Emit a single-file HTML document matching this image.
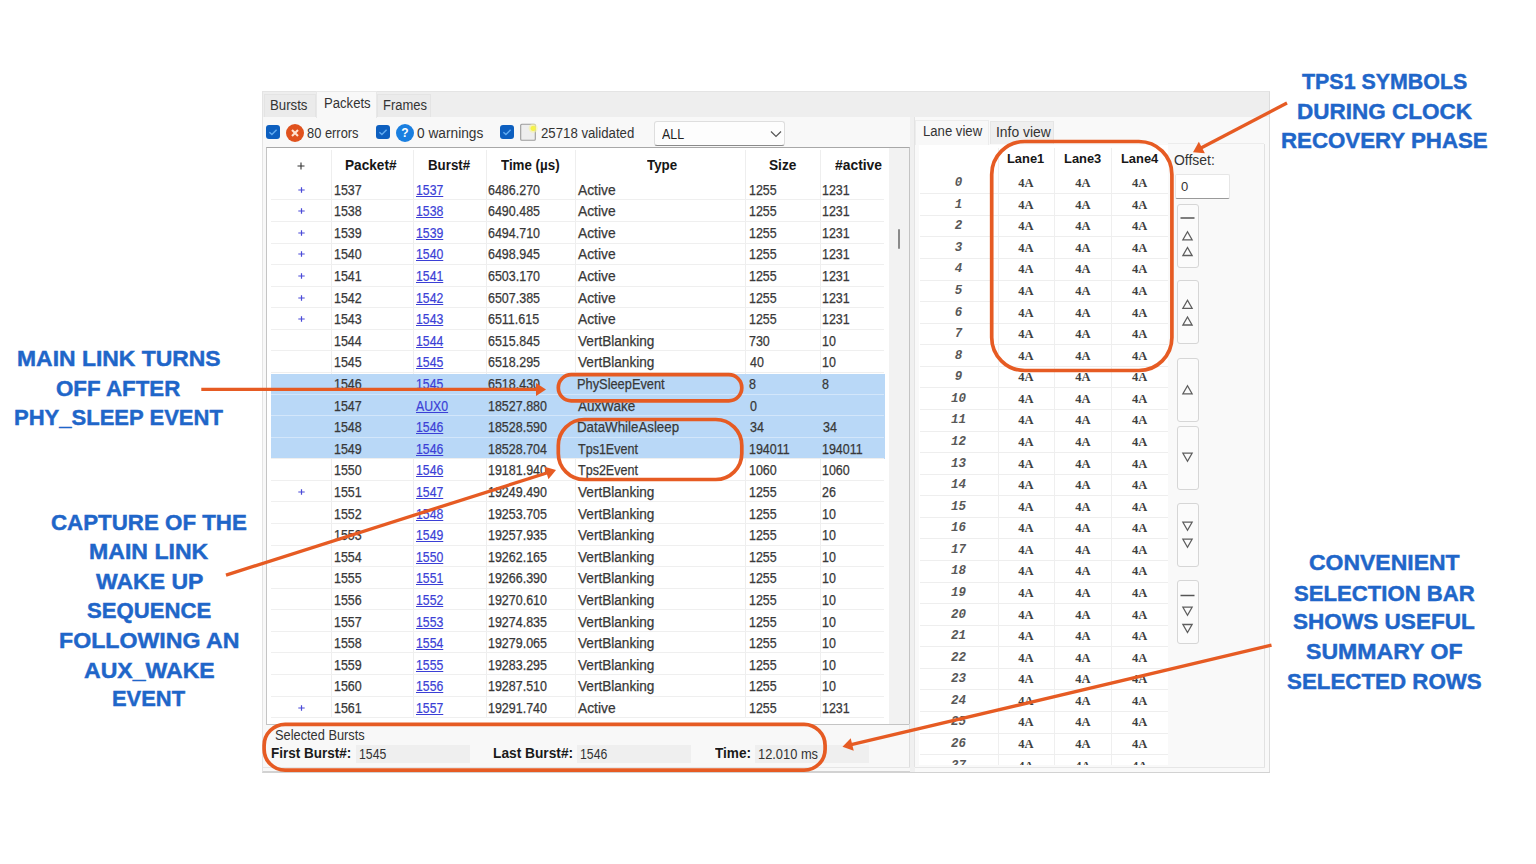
<!DOCTYPE html><html><head><meta charset="utf-8"><title>Packets</title><style>
*{margin:0;padding:0;box-sizing:border-box}
html,body{width:1536px;height:864px;overflow:hidden;background:#fff;position:relative;font-family:"Liberation Sans",sans-serif}
.ab{position:absolute}
.ui{font-size:12px;color:#2a2a2a;white-space:nowrap}
.t{position:absolute;white-space:nowrap;font-size:12px;color:#2b2b2b;line-height:21px;height:21px}
.lk{color:#3b3fd6;text-decoration:underline}
.hd{position:absolute;white-space:nowrap;font-size:13.4px;font-weight:bold;color:#151515;line-height:20px;height:20px;transform:translateX(-50%)}
.pl{position:absolute;color:#4545d8;font-size:12px;font-weight:bold;line-height:21px;height:21px;transform:translateX(-50%)}
.hl{position:absolute;left:271px;width:614px;background:#b9d8f7}
.rl{position:absolute;height:1px;background:#ededed}
.vl{position:absolute;width:1px;background:#eeeeee}
.ann{position:absolute;font-weight:bold;color:#1f66c9;-webkit-text-stroke:0.45px #1f66c9;white-space:nowrap}
.ln{position:absolute;width:1px;background:#ececec}
.ri{position:absolute;font-family:"Liberation Mono",monospace;font-style:italic;font-weight:bold;font-size:12.5px;color:#585858;line-height:20px;height:20px;transform:translateX(-50%)}
.la{position:absolute;font-family:"Liberation Serif",serif;font-weight:bold;font-size:12.5px;color:#3f3f3f;line-height:20px;height:20px;transform:translateX(-50%)}
.btn{position:absolute;left:1177px;width:22px;background:#fbfbfb;border:1px solid #d6d6d6;border-radius:3px}
</style></head><body>
<div class="ab" style="left:262px;top:91px;width:1008px;height:682px;background:#f8f8f8;border:1px solid #e4e4e4;border-bottom:2px solid #d2d2d2;border-right-color:#dcdcdc"></div>
<div class="ab" style="left:263px;top:92px;width:1006px;height:25px;background:#eeeeee"></div>
<div class="ab" style="left:264px;top:94px;width:52px;height:23px;background:#ebebeb;border:1px solid #e4e4e4;border-bottom:none"></div>
<div class="ab" style="left:316px;top:91px;width:61px;height:27px;background:#f8f8f8;border:1px solid #e8e8e8;border-bottom:none"></div>
<div class="ab" style="left:377px;top:94px;width:54px;height:23px;background:#ebebeb;border:1px solid #e4e4e4;border-bottom:none"></div>
<div class="ab" style="left:266px;top:125px;width:14px;height:14px;background:#0d5fbf;border-radius:3px"><svg width="14" height="14" style="position:absolute;left:0;top:0"><path d="M3.4 7.3 L5.9 9.6 L10.6 4.8" stroke="#62acf2" stroke-width="1.4" fill="none"/></svg></div>
<div class="ab" style="left:286px;top:124px;width:18px;height:18px;border-radius:50%;background:#e0521e"><svg width="18" height="18" style="position:absolute;left:0;top:0"><path d="M6 6 L12 12 M12 6 L6 12" stroke="#ffe3d2" stroke-width="2.1"/></svg></div>
<div class="ab" style="left:376px;top:125px;width:14px;height:14px;background:#0d5fbf;border-radius:3px"><svg width="14" height="14" style="position:absolute;left:0;top:0"><path d="M3.4 7.3 L5.9 9.6 L10.6 4.8" stroke="#62acf2" stroke-width="1.4" fill="none"/></svg></div>
<div class="ab" style="left:396px;top:124px;width:18px;height:18px;border-radius:50%;background:#1a7fe0;color:#fff;font-weight:bold;font-size:12px;line-height:18px;text-align:center">?</div>
<div class="ab" style="left:500px;top:125px;width:14px;height:14px;background:#0d5fbf;border-radius:3px"><svg width="14" height="14" style="position:absolute;left:0;top:0"><path d="M3.4 7.3 L5.9 9.6 L10.6 4.8" stroke="#62acf2" stroke-width="1.4" fill="none"/></svg></div>
<svg class="ab" style="left:519px;top:122px" width="20" height="21"><rect x="1.7" y="2.3" width="14.6" height="16" rx="1" fill="#eeeeee" stroke="#9a9a9a" stroke-width="1.1"/><circle cx="14.2" cy="6.3" r="4.5" fill="#f8f5a0" opacity="0.6"/><circle cx="14.2" cy="6.3" r="2.6" fill="#f5f24a"/></svg>
<div class="ab" style="left:654px;top:121px;width:131px;height:25px;background:#fdfdfd;border:1px solid #dedede;border-bottom:1px solid #8a8a8a;border-radius:3px"></div>
<svg class="ab" style="left:769px;top:129px" width="14" height="10"><path d="M2 2.5 L7 7.5 L12 2.5" stroke="#555" stroke-width="1.2" fill="none"/></svg>
<div class="ab" style="left:266px;top:147px;width:644px;height:578px;background:#fff;border:1px solid #c4c4c4;border-top-color:#a8a8a8"></div>
<div class="ab" style="left:889px;top:148px;width:20px;height:576px;background:#f2f2f2"></div>
<div class="ab" style="left:897.5px;top:229px;width:2px;height:20px;background:#8a8a8a;border-radius:1px"></div>
<div class="vl" style="left:331px;top:150px;height:568px"></div>
<div class="vl" style="left:412.5px;top:150px;height:568px"></div>
<div class="vl" style="left:486px;top:150px;height:568px"></div>
<div class="vl" style="left:575px;top:150px;height:568px"></div>
<div class="vl" style="left:745px;top:150px;height:568px"></div>
<div class="vl" style="left:820px;top:150px;height:568px"></div>
<svg class="ab" style="left:297px;top:162px" width="8" height="8"><path d="M0.5 4 H7.5 M4 0.5 V7.5" stroke="#333" stroke-width="1.1"/></svg>
<div class="hl" style="top:373.53px;height:85.28px"></div>
<div class="rl" style="left:271px;width:613px;top:199.47px;background:#efefef"></div>
<div class="rl" style="left:271px;width:613px;top:221.04px;background:#efefef"></div>
<div class="rl" style="left:271px;width:613px;top:242.61px;background:#efefef"></div>
<div class="rl" style="left:271px;width:613px;top:264.18px;background:#efefef"></div>
<div class="rl" style="left:271px;width:613px;top:285.75px;background:#efefef"></div>
<div class="rl" style="left:271px;width:613px;top:307.32px;background:#efefef"></div>
<div class="rl" style="left:271px;width:613px;top:328.89px;background:#efefef"></div>
<div class="rl" style="left:271px;width:613px;top:350.46px;background:#efefef"></div>
<div class="rl" style="left:271px;width:613px;top:372.03px;background:#efefef"></div>
<div class="rl" style="left:271px;width:613px;top:393.60px;background:#d3e6fa"></div>
<div class="rl" style="left:271px;width:613px;top:415.17px;background:#d3e6fa"></div>
<div class="rl" style="left:271px;width:613px;top:436.74px;background:#d3e6fa"></div>
<div class="rl" style="left:271px;width:613px;top:458.31px;background:#efefef"></div>
<div class="rl" style="left:271px;width:613px;top:479.88px;background:#efefef"></div>
<div class="rl" style="left:271px;width:613px;top:501.45px;background:#efefef"></div>
<div class="rl" style="left:271px;width:613px;top:523.02px;background:#efefef"></div>
<div class="rl" style="left:271px;width:613px;top:544.59px;background:#efefef"></div>
<div class="rl" style="left:271px;width:613px;top:566.16px;background:#efefef"></div>
<div class="rl" style="left:271px;width:613px;top:587.73px;background:#efefef"></div>
<div class="rl" style="left:271px;width:613px;top:609.30px;background:#efefef"></div>
<div class="rl" style="left:271px;width:613px;top:630.87px;background:#efefef"></div>
<div class="rl" style="left:271px;width:613px;top:652.44px;background:#efefef"></div>
<div class="rl" style="left:271px;width:613px;top:674.01px;background:#efefef"></div>
<div class="rl" style="left:271px;width:613px;top:695.58px;background:#efefef"></div>
<div class="rl" style="left:271px;width:613px;top:717.15px;background:#efefef"></div>
<svg class="ab" style="left:297.5px;top:186.60px" width="7" height="6"><path d="M0.3 3 H6.7 M3.5 0.2 V5.8" stroke="#4a4ad8" stroke-width="1.2"/></svg>
<svg class="ab" style="left:297.5px;top:208.20px" width="7" height="6"><path d="M0.3 3 H6.7 M3.5 0.2 V5.8" stroke="#4a4ad8" stroke-width="1.2"/></svg>
<svg class="ab" style="left:297.5px;top:229.80px" width="7" height="6"><path d="M0.3 3 H6.7 M3.5 0.2 V5.8" stroke="#4a4ad8" stroke-width="1.2"/></svg>
<svg class="ab" style="left:297.5px;top:251.40px" width="7" height="6"><path d="M0.3 3 H6.7 M3.5 0.2 V5.8" stroke="#4a4ad8" stroke-width="1.2"/></svg>
<svg class="ab" style="left:297.5px;top:273.00px" width="7" height="6"><path d="M0.3 3 H6.7 M3.5 0.2 V5.8" stroke="#4a4ad8" stroke-width="1.2"/></svg>
<svg class="ab" style="left:297.5px;top:294.60px" width="7" height="6"><path d="M0.3 3 H6.7 M3.5 0.2 V5.8" stroke="#4a4ad8" stroke-width="1.2"/></svg>
<svg class="ab" style="left:297.5px;top:316.20px" width="7" height="6"><path d="M0.3 3 H6.7 M3.5 0.2 V5.8" stroke="#4a4ad8" stroke-width="1.2"/></svg>
<svg class="ab" style="left:297.5px;top:489.00px" width="7" height="6"><path d="M0.3 3 H6.7 M3.5 0.2 V5.8" stroke="#4a4ad8" stroke-width="1.2"/></svg>
<svg class="ab" style="left:297.5px;top:705.00px" width="7" height="6"><path d="M0.3 3 H6.7 M3.5 0.2 V5.8" stroke="#4a4ad8" stroke-width="1.2"/></svg>
<div class="ab" style="left:356px;top:745px;width:114px;height:18px;background:#efefef"></div>
<div class="ab" style="left:577px;top:745px;width:114px;height:18px;background:#efefef"></div>
<div class="ab" style="left:755px;top:745px;width:114px;height:18px;background:#efefef"></div>
<div class="ab" style="left:910px;top:117px;width:5px;height:655px;background:#f0f0f0"></div>
<div class="ab" style="left:914px;top:117px;width:1px;height:650px;background:#e3e3e3"></div>
<div class="ab" style="left:915px;top:117px;width:354px;height:655px;background:#f9f9f9"></div>
<div class="ab" style="left:909px;top:724px;width:1px;height:43px;background:#dedede"></div>
<div class="ab" style="left:263px;top:767px;width:647px;height:1px;background:#e6e6e6"></div>
<div class="ab" style="left:915px;top:767px;width:350px;height:1px;background:#e6e6e6"></div>
<div class="ab" style="left:915px;top:120px;width:74px;height:25px;background:#f8f8f8;border:1px solid #ececec;border-bottom:none"></div>
<div class="ab" style="left:990px;top:121px;width:64px;height:23px;background:#efefef;border:1px solid #e6e6e6;border-bottom:none"></div>
<div class="ab" style="left:919px;top:145px;width:249px;height:620px;background:#fff;overflow:hidden">
<div class="vl" style="left:78.5px;top:3px;height:617px;background:#efefef"></div>
<div class="vl" style="left:134.5px;top:3px;height:617px;background:#efefef"></div>
<div class="vl" style="left:192px;top:3px;height:617px;background:#efefef"></div>
<div class="vl" style="left:248.5px;top:3px;height:617px;background:#efefef"></div>
<div class="rl" style="left:1px;width:248px;top:48.27px;background:#eeeeee"></div>
<div class="ri" style="left:39.5px;top:28.20px">0</div>
<div class="la" style="left:107px;top:28.20px">4A</div>
<div class="la" style="left:163.79999999999995px;top:28.20px">4A</div>
<div class="la" style="left:220.5999999999999px;top:28.20px">4A</div>
<div class="rl" style="left:1px;width:248px;top:69.84px;background:#eeeeee"></div>
<div class="ri" style="left:39.5px;top:49.77px">1</div>
<div class="la" style="left:107px;top:49.77px">4A</div>
<div class="la" style="left:163.79999999999995px;top:49.77px">4A</div>
<div class="la" style="left:220.5999999999999px;top:49.77px">4A</div>
<div class="rl" style="left:1px;width:248px;top:91.41px;background:#eeeeee"></div>
<div class="ri" style="left:39.5px;top:71.34px">2</div>
<div class="la" style="left:107px;top:71.34px">4A</div>
<div class="la" style="left:163.79999999999995px;top:71.34px">4A</div>
<div class="la" style="left:220.5999999999999px;top:71.34px">4A</div>
<div class="rl" style="left:1px;width:248px;top:112.98px;background:#eeeeee"></div>
<div class="ri" style="left:39.5px;top:92.91px">3</div>
<div class="la" style="left:107px;top:92.91px">4A</div>
<div class="la" style="left:163.79999999999995px;top:92.91px">4A</div>
<div class="la" style="left:220.5999999999999px;top:92.91px">4A</div>
<div class="rl" style="left:1px;width:248px;top:134.55px;background:#eeeeee"></div>
<div class="ri" style="left:39.5px;top:114.48px">4</div>
<div class="la" style="left:107px;top:114.48px">4A</div>
<div class="la" style="left:163.79999999999995px;top:114.48px">4A</div>
<div class="la" style="left:220.5999999999999px;top:114.48px">4A</div>
<div class="rl" style="left:1px;width:248px;top:156.12px;background:#eeeeee"></div>
<div class="ri" style="left:39.5px;top:136.05px">5</div>
<div class="la" style="left:107px;top:136.05px">4A</div>
<div class="la" style="left:163.79999999999995px;top:136.05px">4A</div>
<div class="la" style="left:220.5999999999999px;top:136.05px">4A</div>
<div class="rl" style="left:1px;width:248px;top:177.69px;background:#eeeeee"></div>
<div class="ri" style="left:39.5px;top:157.62px">6</div>
<div class="la" style="left:107px;top:157.62px">4A</div>
<div class="la" style="left:163.79999999999995px;top:157.62px">4A</div>
<div class="la" style="left:220.5999999999999px;top:157.62px">4A</div>
<div class="rl" style="left:1px;width:248px;top:199.26px;background:#eeeeee"></div>
<div class="ri" style="left:39.5px;top:179.19px">7</div>
<div class="la" style="left:107px;top:179.19px">4A</div>
<div class="la" style="left:163.79999999999995px;top:179.19px">4A</div>
<div class="la" style="left:220.5999999999999px;top:179.19px">4A</div>
<div class="rl" style="left:1px;width:248px;top:220.83px;background:#eeeeee"></div>
<div class="ri" style="left:39.5px;top:200.76px">8</div>
<div class="la" style="left:107px;top:200.76px">4A</div>
<div class="la" style="left:163.79999999999995px;top:200.76px">4A</div>
<div class="la" style="left:220.5999999999999px;top:200.76px">4A</div>
<div class="rl" style="left:1px;width:248px;top:242.40px;background:#eeeeee"></div>
<div class="ri" style="left:39.5px;top:222.33px">9</div>
<div class="la" style="left:107px;top:222.33px">4A</div>
<div class="la" style="left:163.79999999999995px;top:222.33px">4A</div>
<div class="la" style="left:220.5999999999999px;top:222.33px">4A</div>
<div class="rl" style="left:1px;width:248px;top:263.97px;background:#eeeeee"></div>
<div class="ri" style="left:39.5px;top:243.90px">10</div>
<div class="la" style="left:107px;top:243.90px">4A</div>
<div class="la" style="left:163.79999999999995px;top:243.90px">4A</div>
<div class="la" style="left:220.5999999999999px;top:243.90px">4A</div>
<div class="rl" style="left:1px;width:248px;top:285.54px;background:#eeeeee"></div>
<div class="ri" style="left:39.5px;top:265.47px">11</div>
<div class="la" style="left:107px;top:265.47px">4A</div>
<div class="la" style="left:163.79999999999995px;top:265.47px">4A</div>
<div class="la" style="left:220.5999999999999px;top:265.47px">4A</div>
<div class="rl" style="left:1px;width:248px;top:307.11px;background:#eeeeee"></div>
<div class="ri" style="left:39.5px;top:287.04px">12</div>
<div class="la" style="left:107px;top:287.04px">4A</div>
<div class="la" style="left:163.79999999999995px;top:287.04px">4A</div>
<div class="la" style="left:220.5999999999999px;top:287.04px">4A</div>
<div class="rl" style="left:1px;width:248px;top:328.68px;background:#eeeeee"></div>
<div class="ri" style="left:39.5px;top:308.61px">13</div>
<div class="la" style="left:107px;top:308.61px">4A</div>
<div class="la" style="left:163.79999999999995px;top:308.61px">4A</div>
<div class="la" style="left:220.5999999999999px;top:308.61px">4A</div>
<div class="rl" style="left:1px;width:248px;top:350.25px;background:#eeeeee"></div>
<div class="ri" style="left:39.5px;top:330.18px">14</div>
<div class="la" style="left:107px;top:330.18px">4A</div>
<div class="la" style="left:163.79999999999995px;top:330.18px">4A</div>
<div class="la" style="left:220.5999999999999px;top:330.18px">4A</div>
<div class="rl" style="left:1px;width:248px;top:371.82px;background:#eeeeee"></div>
<div class="ri" style="left:39.5px;top:351.75px">15</div>
<div class="la" style="left:107px;top:351.75px">4A</div>
<div class="la" style="left:163.79999999999995px;top:351.75px">4A</div>
<div class="la" style="left:220.5999999999999px;top:351.75px">4A</div>
<div class="rl" style="left:1px;width:248px;top:393.39px;background:#eeeeee"></div>
<div class="ri" style="left:39.5px;top:373.32px">16</div>
<div class="la" style="left:107px;top:373.32px">4A</div>
<div class="la" style="left:163.79999999999995px;top:373.32px">4A</div>
<div class="la" style="left:220.5999999999999px;top:373.32px">4A</div>
<div class="rl" style="left:1px;width:248px;top:414.96px;background:#eeeeee"></div>
<div class="ri" style="left:39.5px;top:394.89px">17</div>
<div class="la" style="left:107px;top:394.89px">4A</div>
<div class="la" style="left:163.79999999999995px;top:394.89px">4A</div>
<div class="la" style="left:220.5999999999999px;top:394.89px">4A</div>
<div class="rl" style="left:1px;width:248px;top:436.53px;background:#eeeeee"></div>
<div class="ri" style="left:39.5px;top:416.46px">18</div>
<div class="la" style="left:107px;top:416.46px">4A</div>
<div class="la" style="left:163.79999999999995px;top:416.46px">4A</div>
<div class="la" style="left:220.5999999999999px;top:416.46px">4A</div>
<div class="rl" style="left:1px;width:248px;top:458.10px;background:#eeeeee"></div>
<div class="ri" style="left:39.5px;top:438.03px">19</div>
<div class="la" style="left:107px;top:438.03px">4A</div>
<div class="la" style="left:163.79999999999995px;top:438.03px">4A</div>
<div class="la" style="left:220.5999999999999px;top:438.03px">4A</div>
<div class="rl" style="left:1px;width:248px;top:479.67px;background:#eeeeee"></div>
<div class="ri" style="left:39.5px;top:459.60px">20</div>
<div class="la" style="left:107px;top:459.60px">4A</div>
<div class="la" style="left:163.79999999999995px;top:459.60px">4A</div>
<div class="la" style="left:220.5999999999999px;top:459.60px">4A</div>
<div class="rl" style="left:1px;width:248px;top:501.24px;background:#eeeeee"></div>
<div class="ri" style="left:39.5px;top:481.17px">21</div>
<div class="la" style="left:107px;top:481.17px">4A</div>
<div class="la" style="left:163.79999999999995px;top:481.17px">4A</div>
<div class="la" style="left:220.5999999999999px;top:481.17px">4A</div>
<div class="rl" style="left:1px;width:248px;top:522.81px;background:#eeeeee"></div>
<div class="ri" style="left:39.5px;top:502.74px">22</div>
<div class="la" style="left:107px;top:502.74px">4A</div>
<div class="la" style="left:163.79999999999995px;top:502.74px">4A</div>
<div class="la" style="left:220.5999999999999px;top:502.74px">4A</div>
<div class="rl" style="left:1px;width:248px;top:544.38px;background:#eeeeee"></div>
<div class="ri" style="left:39.5px;top:524.31px">23</div>
<div class="la" style="left:107px;top:524.31px">4A</div>
<div class="la" style="left:163.79999999999995px;top:524.31px">4A</div>
<div class="la" style="left:220.5999999999999px;top:524.31px">4A</div>
<div class="rl" style="left:1px;width:248px;top:565.95px;background:#eeeeee"></div>
<div class="ri" style="left:39.5px;top:545.88px">24</div>
<div class="la" style="left:107px;top:545.88px">4A</div>
<div class="la" style="left:163.79999999999995px;top:545.88px">4A</div>
<div class="la" style="left:220.5999999999999px;top:545.88px">4A</div>
<div class="rl" style="left:1px;width:248px;top:587.52px;background:#eeeeee"></div>
<div class="ri" style="left:39.5px;top:567.45px">25</div>
<div class="la" style="left:107px;top:567.45px">4A</div>
<div class="la" style="left:163.79999999999995px;top:567.45px">4A</div>
<div class="la" style="left:220.5999999999999px;top:567.45px">4A</div>
<div class="rl" style="left:1px;width:248px;top:609.09px;background:#eeeeee"></div>
<div class="ri" style="left:39.5px;top:589.02px">26</div>
<div class="la" style="left:107px;top:589.02px">4A</div>
<div class="la" style="left:163.79999999999995px;top:589.02px">4A</div>
<div class="la" style="left:220.5999999999999px;top:589.02px">4A</div>
<div class="rl" style="left:1px;width:248px;top:630.66px;background:#eeeeee"></div>
<div class="ri" style="left:39.5px;top:610.59px">27</div>
<div class="la" style="left:107px;top:610.59px">4A</div>
<div class="la" style="left:163.79999999999995px;top:610.59px">4A</div>
<div class="la" style="left:220.5999999999999px;top:610.59px">4A</div>
</div>
<div class="ab" style="left:1264px;top:144px;width:1px;height:623px;background:#e2e2e2"></div>
<div class="ab" style="left:1168px;top:143px;width:96px;height:1px;background:#ececec"></div>
<div class="ab" style="left:1175px;top:174px;width:55px;height:25px;background:#fff;border:1px solid #e6e6e6;border-bottom-color:#9a9a9a;border-radius:2px"></div>
<div class="ab ui" style="left:1181px;top:179px;font-size:13px;color:#333">0</div>
<div class="btn" style="top:203.5px;height:64.0px"></div>
<svg class="ab" style="left:0;top:0" width="1536" height="864"><path d="M1180.5 218 L1194.5 218" stroke="#555" stroke-width="1.5"/><path d="M1182.9 239.8 L1187.5 231.8 L1192.1 239.8 Z" stroke="#5e5e5e" stroke-width="1.3" fill="none"/><path d="M1182.9 255.5 L1187.5 247.5 L1192.1 255.5 Z" stroke="#5e5e5e" stroke-width="1.3" fill="none"/></svg>
<div class="btn" style="top:280px;height:64px"></div>
<svg class="ab" style="left:0;top:0" width="1536" height="864"><path d="M1182.9 308.3 L1187.5 300.3 L1192.1 308.3 Z" stroke="#5e5e5e" stroke-width="1.3" fill="none"/><path d="M1182.9 325.0 L1187.5 317.0 L1192.1 325.0 Z" stroke="#5e5e5e" stroke-width="1.3" fill="none"/></svg>
<div class="btn" style="top:358px;height:64px"></div>
<svg class="ab" style="left:0;top:0" width="1536" height="864"><path d="M1182.9 393.8 L1187.5 385.8 L1192.1 393.8 Z" stroke="#5e5e5e" stroke-width="1.3" fill="none"/></svg>
<div class="btn" style="top:426px;height:64px"></div>
<svg class="ab" style="left:0;top:0" width="1536" height="864"><path d="M1182.9 453.2 L1187.5 461.2 L1192.1 453.2 Z" stroke="#5e5e5e" stroke-width="1.3" fill="none"/></svg>
<div class="btn" style="top:503px;height:63.5px"></div>
<svg class="ab" style="left:0;top:0" width="1536" height="864"><path d="M1182.9 522.2 L1187.5 530.2 L1192.1 522.2 Z" stroke="#5e5e5e" stroke-width="1.3" fill="none"/><path d="M1182.9 539.2 L1187.5 547.2 L1192.1 539.2 Z" stroke="#5e5e5e" stroke-width="1.3" fill="none"/></svg>
<div class="btn" style="top:580px;height:64px"></div>
<svg class="ab" style="left:0;top:0" width="1536" height="864"><path d="M1180.5 595.5 L1194.5 595.5" stroke="#555" stroke-width="1.5"/><path d="M1182.9 607.2 L1187.5 615.2 L1192.1 607.2 Z" stroke="#5e5e5e" stroke-width="1.3" fill="none"/><path d="M1182.9 624.5 L1187.5 632.5 L1192.1 624.5 Z" stroke="#5e5e5e" stroke-width="1.3" fill="none"/></svg>
<div class="ab" style="left:269.81px;top:95.00px;white-space:pre;line-height:20px;height:20px;font-size:14px;color:#333;transform-origin:0 0;transform:scaleX(0.9434);">Bursts</div>
<div class="ab" style="left:324.46px;top:92.75px;white-space:pre;line-height:20px;height:20px;font-size:14px;color:#333;transform-origin:0 0;transform:scaleX(0.9375);">Packets</div>
<div class="ab" style="left:383.07px;top:95.00px;white-space:pre;line-height:20px;height:20px;font-size:14px;color:#333;transform-origin:0 0;transform:scaleX(0.9261);">Frames</div>
<div class="ab" style="left:306.98px;top:122.50px;white-space:pre;line-height:20px;height:20px;font-size:14px;color:#333;transform-origin:0 0;transform:scaleX(0.9200);">80 errors</div>
<div class="ab" style="left:416.92px;top:122.50px;white-space:pre;line-height:20px;height:20px;font-size:14px;color:#333;transform-origin:0 0;transform:scaleX(0.9788);">0 warnings</div>
<div class="ab" style="left:540.96px;top:122.50px;white-space:pre;line-height:20px;height:20px;font-size:14px;color:#333;transform-origin:0 0;transform:scaleX(0.9433);">25718 validated</div>
<div class="ab" style="left:661.50px;top:124.00px;white-space:pre;line-height:20px;height:20px;font-size:14px;color:#222;transform-origin:0 0;transform:scaleX(0.8854);">ALL</div>
<div class="ab" style="left:345.31px;top:155.20px;white-space:pre;line-height:20px;height:20px;font-size:14.5px;font-weight:bold;color:#161616;transform-origin:0 0;transform:scaleX(0.9398);">Packet#</div>
<div class="ab" style="left:427.83px;top:155.20px;white-space:pre;line-height:20px;height:20px;font-size:14.5px;font-weight:bold;color:#161616;transform-origin:0 0;transform:scaleX(0.9167);">Burst#</div>
<div class="ab" style="left:501.00px;top:155.20px;white-space:pre;line-height:20px;height:20px;font-size:14.5px;font-weight:bold;color:#161616;transform-origin:0 0;transform:scaleX(0.9206);">Time (µs)</div>
<div class="ab" style="left:646.50px;top:155.20px;white-space:pre;line-height:20px;height:20px;font-size:14.5px;font-weight:bold;color:#161616;transform-origin:0 0;transform:scaleX(0.9219);">Type</div>
<div class="ab" style="left:768.66px;top:155.20px;white-space:pre;line-height:20px;height:20px;font-size:14.5px;font-weight:bold;color:#161616;transform-origin:0 0;transform:scaleX(0.9429);">Size</div>
<div class="ab" style="left:834.90px;top:155.20px;white-space:pre;line-height:20px;height:20px;font-size:14.5px;font-weight:bold;color:#161616;transform-origin:0 0;transform:scaleX(0.9561);">#active</div>
<div class="ab" style="left:333.71px;top:179.60px;white-space:pre;line-height:20px;height:20px;font-size:14px;color:#383838;-webkit-text-stroke:0.25px #383838;transform-origin:0 0;transform:scaleX(0.8904);">1537</div>
<div class="ab" style="left:416.25px;top:179.60px;white-space:pre;line-height:20px;height:20px;font-size:14px;color:#3b3fd6;text-decoration:underline;-webkit-text-stroke:0.2px #3b3fd6;transform-origin:0 0;transform:scaleX(0.8750);">1537</div>
<div class="ab" style="left:487.86px;top:179.60px;white-space:pre;line-height:20px;height:20px;font-size:14px;color:#383838;-webkit-text-stroke:0.25px #383838;transform-origin:0 0;transform:scaleX(0.8904);">6486.270</div>
<div class="ab" style="left:578.00px;top:179.60px;white-space:pre;line-height:20px;height:20px;font-size:14px;color:#383838;-webkit-text-stroke:0.25px #383838;transform-origin:0 0;transform:scaleX(0.9868);">Active</div>
<div class="ab" style="left:748.61px;top:179.60px;white-space:pre;line-height:20px;height:20px;font-size:14px;color:#383838;-webkit-text-stroke:0.25px #383838;transform-origin:0 0;transform:scaleX(0.8904);">1255</div>
<div class="ab" style="left:822.31px;top:179.60px;white-space:pre;line-height:20px;height:20px;font-size:14px;color:#383838;-webkit-text-stroke:0.25px #383838;transform-origin:0 0;transform:scaleX(0.8904);">1231</div>
<div class="ab" style="left:333.71px;top:201.20px;white-space:pre;line-height:20px;height:20px;font-size:14px;color:#383838;-webkit-text-stroke:0.25px #383838;transform-origin:0 0;transform:scaleX(0.8904);">1538</div>
<div class="ab" style="left:416.25px;top:201.20px;white-space:pre;line-height:20px;height:20px;font-size:14px;color:#3b3fd6;text-decoration:underline;-webkit-text-stroke:0.2px #3b3fd6;transform-origin:0 0;transform:scaleX(0.8750);">1538</div>
<div class="ab" style="left:487.86px;top:201.20px;white-space:pre;line-height:20px;height:20px;font-size:14px;color:#383838;-webkit-text-stroke:0.25px #383838;transform-origin:0 0;transform:scaleX(0.8904);">6490.485</div>
<div class="ab" style="left:578.00px;top:201.20px;white-space:pre;line-height:20px;height:20px;font-size:14px;color:#383838;-webkit-text-stroke:0.25px #383838;transform-origin:0 0;transform:scaleX(0.9868);">Active</div>
<div class="ab" style="left:748.61px;top:201.20px;white-space:pre;line-height:20px;height:20px;font-size:14px;color:#383838;-webkit-text-stroke:0.25px #383838;transform-origin:0 0;transform:scaleX(0.8904);">1255</div>
<div class="ab" style="left:822.31px;top:201.20px;white-space:pre;line-height:20px;height:20px;font-size:14px;color:#383838;-webkit-text-stroke:0.25px #383838;transform-origin:0 0;transform:scaleX(0.8904);">1231</div>
<div class="ab" style="left:333.71px;top:222.80px;white-space:pre;line-height:20px;height:20px;font-size:14px;color:#383838;-webkit-text-stroke:0.25px #383838;transform-origin:0 0;transform:scaleX(0.8904);">1539</div>
<div class="ab" style="left:416.25px;top:222.80px;white-space:pre;line-height:20px;height:20px;font-size:14px;color:#3b3fd6;text-decoration:underline;-webkit-text-stroke:0.2px #3b3fd6;transform-origin:0 0;transform:scaleX(0.8750);">1539</div>
<div class="ab" style="left:487.86px;top:222.80px;white-space:pre;line-height:20px;height:20px;font-size:14px;color:#383838;-webkit-text-stroke:0.25px #383838;transform-origin:0 0;transform:scaleX(0.8904);">6494.710</div>
<div class="ab" style="left:578.00px;top:222.80px;white-space:pre;line-height:20px;height:20px;font-size:14px;color:#383838;-webkit-text-stroke:0.25px #383838;transform-origin:0 0;transform:scaleX(0.9868);">Active</div>
<div class="ab" style="left:748.61px;top:222.80px;white-space:pre;line-height:20px;height:20px;font-size:14px;color:#383838;-webkit-text-stroke:0.25px #383838;transform-origin:0 0;transform:scaleX(0.8904);">1255</div>
<div class="ab" style="left:822.31px;top:222.80px;white-space:pre;line-height:20px;height:20px;font-size:14px;color:#383838;-webkit-text-stroke:0.25px #383838;transform-origin:0 0;transform:scaleX(0.8904);">1231</div>
<div class="ab" style="left:333.71px;top:244.40px;white-space:pre;line-height:20px;height:20px;font-size:14px;color:#383838;-webkit-text-stroke:0.25px #383838;transform-origin:0 0;transform:scaleX(0.8904);">1540</div>
<div class="ab" style="left:416.25px;top:244.40px;white-space:pre;line-height:20px;height:20px;font-size:14px;color:#3b3fd6;text-decoration:underline;-webkit-text-stroke:0.2px #3b3fd6;transform-origin:0 0;transform:scaleX(0.8750);">1540</div>
<div class="ab" style="left:487.86px;top:244.40px;white-space:pre;line-height:20px;height:20px;font-size:14px;color:#383838;-webkit-text-stroke:0.25px #383838;transform-origin:0 0;transform:scaleX(0.8904);">6498.945</div>
<div class="ab" style="left:578.00px;top:244.40px;white-space:pre;line-height:20px;height:20px;font-size:14px;color:#383838;-webkit-text-stroke:0.25px #383838;transform-origin:0 0;transform:scaleX(0.9868);">Active</div>
<div class="ab" style="left:748.61px;top:244.40px;white-space:pre;line-height:20px;height:20px;font-size:14px;color:#383838;-webkit-text-stroke:0.25px #383838;transform-origin:0 0;transform:scaleX(0.8904);">1255</div>
<div class="ab" style="left:822.31px;top:244.40px;white-space:pre;line-height:20px;height:20px;font-size:14px;color:#383838;-webkit-text-stroke:0.25px #383838;transform-origin:0 0;transform:scaleX(0.8904);">1231</div>
<div class="ab" style="left:333.71px;top:266.00px;white-space:pre;line-height:20px;height:20px;font-size:14px;color:#383838;-webkit-text-stroke:0.25px #383838;transform-origin:0 0;transform:scaleX(0.8904);">1541</div>
<div class="ab" style="left:416.25px;top:266.00px;white-space:pre;line-height:20px;height:20px;font-size:14px;color:#3b3fd6;text-decoration:underline;-webkit-text-stroke:0.2px #3b3fd6;transform-origin:0 0;transform:scaleX(0.8750);">1541</div>
<div class="ab" style="left:487.86px;top:266.00px;white-space:pre;line-height:20px;height:20px;font-size:14px;color:#383838;-webkit-text-stroke:0.25px #383838;transform-origin:0 0;transform:scaleX(0.8904);">6503.170</div>
<div class="ab" style="left:578.00px;top:266.00px;white-space:pre;line-height:20px;height:20px;font-size:14px;color:#383838;-webkit-text-stroke:0.25px #383838;transform-origin:0 0;transform:scaleX(0.9868);">Active</div>
<div class="ab" style="left:748.61px;top:266.00px;white-space:pre;line-height:20px;height:20px;font-size:14px;color:#383838;-webkit-text-stroke:0.25px #383838;transform-origin:0 0;transform:scaleX(0.8904);">1255</div>
<div class="ab" style="left:822.31px;top:266.00px;white-space:pre;line-height:20px;height:20px;font-size:14px;color:#383838;-webkit-text-stroke:0.25px #383838;transform-origin:0 0;transform:scaleX(0.8904);">1231</div>
<div class="ab" style="left:333.71px;top:287.60px;white-space:pre;line-height:20px;height:20px;font-size:14px;color:#383838;-webkit-text-stroke:0.25px #383838;transform-origin:0 0;transform:scaleX(0.8904);">1542</div>
<div class="ab" style="left:416.25px;top:287.60px;white-space:pre;line-height:20px;height:20px;font-size:14px;color:#3b3fd6;text-decoration:underline;-webkit-text-stroke:0.2px #3b3fd6;transform-origin:0 0;transform:scaleX(0.8750);">1542</div>
<div class="ab" style="left:487.86px;top:287.60px;white-space:pre;line-height:20px;height:20px;font-size:14px;color:#383838;-webkit-text-stroke:0.25px #383838;transform-origin:0 0;transform:scaleX(0.8904);">6507.385</div>
<div class="ab" style="left:578.00px;top:287.60px;white-space:pre;line-height:20px;height:20px;font-size:14px;color:#383838;-webkit-text-stroke:0.25px #383838;transform-origin:0 0;transform:scaleX(0.9868);">Active</div>
<div class="ab" style="left:748.61px;top:287.60px;white-space:pre;line-height:20px;height:20px;font-size:14px;color:#383838;-webkit-text-stroke:0.25px #383838;transform-origin:0 0;transform:scaleX(0.8904);">1255</div>
<div class="ab" style="left:822.31px;top:287.60px;white-space:pre;line-height:20px;height:20px;font-size:14px;color:#383838;-webkit-text-stroke:0.25px #383838;transform-origin:0 0;transform:scaleX(0.8904);">1231</div>
<div class="ab" style="left:333.71px;top:309.20px;white-space:pre;line-height:20px;height:20px;font-size:14px;color:#383838;-webkit-text-stroke:0.25px #383838;transform-origin:0 0;transform:scaleX(0.8904);">1543</div>
<div class="ab" style="left:416.25px;top:309.20px;white-space:pre;line-height:20px;height:20px;font-size:14px;color:#3b3fd6;text-decoration:underline;-webkit-text-stroke:0.2px #3b3fd6;transform-origin:0 0;transform:scaleX(0.8750);">1543</div>
<div class="ab" style="left:487.86px;top:309.20px;white-space:pre;line-height:20px;height:20px;font-size:14px;color:#383838;-webkit-text-stroke:0.25px #383838;transform-origin:0 0;transform:scaleX(0.8904);">6511.615</div>
<div class="ab" style="left:578.00px;top:309.20px;white-space:pre;line-height:20px;height:20px;font-size:14px;color:#383838;-webkit-text-stroke:0.25px #383838;transform-origin:0 0;transform:scaleX(0.9868);">Active</div>
<div class="ab" style="left:748.61px;top:309.20px;white-space:pre;line-height:20px;height:20px;font-size:14px;color:#383838;-webkit-text-stroke:0.25px #383838;transform-origin:0 0;transform:scaleX(0.8904);">1255</div>
<div class="ab" style="left:822.31px;top:309.20px;white-space:pre;line-height:20px;height:20px;font-size:14px;color:#383838;-webkit-text-stroke:0.25px #383838;transform-origin:0 0;transform:scaleX(0.8904);">1231</div>
<div class="ab" style="left:333.71px;top:330.80px;white-space:pre;line-height:20px;height:20px;font-size:14px;color:#383838;-webkit-text-stroke:0.25px #383838;transform-origin:0 0;transform:scaleX(0.8904);">1544</div>
<div class="ab" style="left:416.25px;top:330.80px;white-space:pre;line-height:20px;height:20px;font-size:14px;color:#3b3fd6;text-decoration:underline;-webkit-text-stroke:0.2px #3b3fd6;transform-origin:0 0;transform:scaleX(0.8750);">1544</div>
<div class="ab" style="left:487.86px;top:330.80px;white-space:pre;line-height:20px;height:20px;font-size:14px;color:#383838;-webkit-text-stroke:0.25px #383838;transform-origin:0 0;transform:scaleX(0.8904);">6515.845</div>
<div class="ab" style="left:578.00px;top:330.80px;white-space:pre;line-height:20px;height:20px;font-size:14px;color:#383838;-webkit-text-stroke:0.25px #383838;transform-origin:0 0;transform:scaleX(0.9712);">VertBlanking</div>
<div class="ab" style="left:748.61px;top:330.80px;white-space:pre;line-height:20px;height:20px;font-size:14px;color:#383838;-webkit-text-stroke:0.25px #383838;transform-origin:0 0;transform:scaleX(0.8904);">730</div>
<div class="ab" style="left:822.31px;top:330.80px;white-space:pre;line-height:20px;height:20px;font-size:14px;color:#383838;-webkit-text-stroke:0.25px #383838;transform-origin:0 0;transform:scaleX(0.8904);">10</div>
<div class="ab" style="left:333.71px;top:352.40px;white-space:pre;line-height:20px;height:20px;font-size:14px;color:#383838;-webkit-text-stroke:0.25px #383838;transform-origin:0 0;transform:scaleX(0.8904);">1545</div>
<div class="ab" style="left:416.25px;top:352.40px;white-space:pre;line-height:20px;height:20px;font-size:14px;color:#3b3fd6;text-decoration:underline;-webkit-text-stroke:0.2px #3b3fd6;transform-origin:0 0;transform:scaleX(0.8750);">1545</div>
<div class="ab" style="left:487.86px;top:352.40px;white-space:pre;line-height:20px;height:20px;font-size:14px;color:#383838;-webkit-text-stroke:0.25px #383838;transform-origin:0 0;transform:scaleX(0.8904);">6518.295</div>
<div class="ab" style="left:578.00px;top:352.40px;white-space:pre;line-height:20px;height:20px;font-size:14px;color:#383838;-webkit-text-stroke:0.25px #383838;transform-origin:0 0;transform:scaleX(0.9712);">VertBlanking</div>
<div class="ab" style="left:749.50px;top:352.40px;white-space:pre;line-height:20px;height:20px;font-size:14px;color:#383838;-webkit-text-stroke:0.25px #383838;transform-origin:0 0;transform:scaleX(0.8904);">40</div>
<div class="ab" style="left:822.31px;top:352.40px;white-space:pre;line-height:20px;height:20px;font-size:14px;color:#383838;-webkit-text-stroke:0.25px #383838;transform-origin:0 0;transform:scaleX(0.8904);">10</div>
<div class="ab" style="left:333.71px;top:374.00px;white-space:pre;line-height:20px;height:20px;font-size:14px;color:#383838;-webkit-text-stroke:0.25px #383838;transform-origin:0 0;transform:scaleX(0.8904);">1546</div>
<div class="ab" style="left:416.25px;top:374.00px;white-space:pre;line-height:20px;height:20px;font-size:14px;color:#3b3fd6;text-decoration:underline;-webkit-text-stroke:0.2px #3b3fd6;transform-origin:0 0;transform:scaleX(0.8750);">1545</div>
<div class="ab" style="left:487.86px;top:374.00px;white-space:pre;line-height:20px;height:20px;font-size:14px;color:#383838;-webkit-text-stroke:0.25px #383838;transform-origin:0 0;transform:scaleX(0.8904);">6518.430</div>
<div class="ab" style="left:577.08px;top:374.00px;white-space:pre;line-height:20px;height:20px;font-size:14px;color:#383838;-webkit-text-stroke:0.25px #383838;transform-origin:0 0;transform:scaleX(0.9158);">PhySleepEvent</div>
<div class="ab" style="left:748.61px;top:374.00px;white-space:pre;line-height:20px;height:20px;font-size:14px;color:#383838;-webkit-text-stroke:0.25px #383838;transform-origin:0 0;transform:scaleX(0.8904);">8</div>
<div class="ab" style="left:822.31px;top:374.00px;white-space:pre;line-height:20px;height:20px;font-size:14px;color:#383838;-webkit-text-stroke:0.25px #383838;transform-origin:0 0;transform:scaleX(0.8904);">8</div>
<div class="ab" style="left:333.71px;top:395.60px;white-space:pre;line-height:20px;height:20px;font-size:14px;color:#383838;-webkit-text-stroke:0.25px #383838;transform-origin:0 0;transform:scaleX(0.8904);">1547</div>
<div class="ab" style="left:416.25px;top:395.60px;white-space:pre;line-height:20px;height:20px;font-size:14px;color:#3b3fd6;text-decoration:underline;-webkit-text-stroke:0.2px #3b3fd6;transform-origin:0 0;transform:scaleX(0.8784);">AUX0</div>
<div class="ab" style="left:487.86px;top:395.60px;white-space:pre;line-height:20px;height:20px;font-size:14px;color:#383838;-webkit-text-stroke:0.25px #383838;transform-origin:0 0;transform:scaleX(0.8904);">18527.880</div>
<div class="ab" style="left:578.00px;top:395.60px;white-space:pre;line-height:20px;height:20px;font-size:14px;color:#383838;-webkit-text-stroke:0.25px #383838;transform-origin:0 0;transform:scaleX(0.9661);">AuxWake</div>
<div class="ab" style="left:749.50px;top:395.60px;white-space:pre;line-height:20px;height:20px;font-size:14px;color:#383838;-webkit-text-stroke:0.25px #383838;transform-origin:0 0;transform:scaleX(0.8904);">0</div>
<div class="ab" style="left:333.71px;top:417.20px;white-space:pre;line-height:20px;height:20px;font-size:14px;color:#383838;-webkit-text-stroke:0.25px #383838;transform-origin:0 0;transform:scaleX(0.8904);">1548</div>
<div class="ab" style="left:416.25px;top:417.20px;white-space:pre;line-height:20px;height:20px;font-size:14px;color:#3b3fd6;text-decoration:underline;-webkit-text-stroke:0.2px #3b3fd6;transform-origin:0 0;transform:scaleX(0.8750);">1546</div>
<div class="ab" style="left:487.86px;top:417.20px;white-space:pre;line-height:20px;height:20px;font-size:14px;color:#383838;-webkit-text-stroke:0.25px #383838;transform-origin:0 0;transform:scaleX(0.8904);">18528.590</div>
<div class="ab" style="left:577.05px;top:417.20px;white-space:pre;line-height:20px;height:20px;font-size:14px;color:#383838;-webkit-text-stroke:0.25px #383838;transform-origin:0 0;transform:scaleX(0.9505);">DataWhileAsleep</div>
<div class="ab" style="left:749.50px;top:417.20px;white-space:pre;line-height:20px;height:20px;font-size:14px;color:#383838;-webkit-text-stroke:0.25px #383838;transform-origin:0 0;transform:scaleX(0.8904);">34</div>
<div class="ab" style="left:823.20px;top:417.20px;white-space:pre;line-height:20px;height:20px;font-size:14px;color:#383838;-webkit-text-stroke:0.25px #383838;transform-origin:0 0;transform:scaleX(0.8904);">34</div>
<div class="ab" style="left:333.71px;top:438.80px;white-space:pre;line-height:20px;height:20px;font-size:14px;color:#383838;-webkit-text-stroke:0.25px #383838;transform-origin:0 0;transform:scaleX(0.8904);">1549</div>
<div class="ab" style="left:416.25px;top:438.80px;white-space:pre;line-height:20px;height:20px;font-size:14px;color:#3b3fd6;text-decoration:underline;-webkit-text-stroke:0.2px #3b3fd6;transform-origin:0 0;transform:scaleX(0.8750);">1546</div>
<div class="ab" style="left:487.86px;top:438.80px;white-space:pre;line-height:20px;height:20px;font-size:14px;color:#383838;-webkit-text-stroke:0.25px #383838;transform-origin:0 0;transform:scaleX(0.8904);">18528.704</div>
<div class="ab" style="left:578.00px;top:438.80px;white-space:pre;line-height:20px;height:20px;font-size:14px;color:#383838;-webkit-text-stroke:0.25px #383838;transform-origin:0 0;transform:scaleX(0.8955);">Tps1Event</div>
<div class="ab" style="left:748.61px;top:438.80px;white-space:pre;line-height:20px;height:20px;font-size:14px;color:#383838;-webkit-text-stroke:0.25px #383838;transform-origin:0 0;transform:scaleX(0.8904);">194011</div>
<div class="ab" style="left:822.31px;top:438.80px;white-space:pre;line-height:20px;height:20px;font-size:14px;color:#383838;-webkit-text-stroke:0.25px #383838;transform-origin:0 0;transform:scaleX(0.8904);">194011</div>
<div class="ab" style="left:333.71px;top:460.40px;white-space:pre;line-height:20px;height:20px;font-size:14px;color:#383838;-webkit-text-stroke:0.25px #383838;transform-origin:0 0;transform:scaleX(0.8904);">1550</div>
<div class="ab" style="left:416.25px;top:460.40px;white-space:pre;line-height:20px;height:20px;font-size:14px;color:#3b3fd6;text-decoration:underline;-webkit-text-stroke:0.2px #3b3fd6;transform-origin:0 0;transform:scaleX(0.8750);">1546</div>
<div class="ab" style="left:487.86px;top:460.40px;white-space:pre;line-height:20px;height:20px;font-size:14px;color:#383838;-webkit-text-stroke:0.25px #383838;transform-origin:0 0;transform:scaleX(0.8904);">19181.940</div>
<div class="ab" style="left:578.00px;top:460.40px;white-space:pre;line-height:20px;height:20px;font-size:14px;color:#383838;-webkit-text-stroke:0.25px #383838;transform-origin:0 0;transform:scaleX(0.8955);">Tps2Event</div>
<div class="ab" style="left:748.61px;top:460.40px;white-space:pre;line-height:20px;height:20px;font-size:14px;color:#383838;-webkit-text-stroke:0.25px #383838;transform-origin:0 0;transform:scaleX(0.8904);">1060</div>
<div class="ab" style="left:822.31px;top:460.40px;white-space:pre;line-height:20px;height:20px;font-size:14px;color:#383838;-webkit-text-stroke:0.25px #383838;transform-origin:0 0;transform:scaleX(0.8904);">1060</div>
<div class="ab" style="left:333.71px;top:482.00px;white-space:pre;line-height:20px;height:20px;font-size:14px;color:#383838;-webkit-text-stroke:0.25px #383838;transform-origin:0 0;transform:scaleX(0.8904);">1551</div>
<div class="ab" style="left:416.25px;top:482.00px;white-space:pre;line-height:20px;height:20px;font-size:14px;color:#3b3fd6;text-decoration:underline;-webkit-text-stroke:0.2px #3b3fd6;transform-origin:0 0;transform:scaleX(0.8750);">1547</div>
<div class="ab" style="left:487.86px;top:482.00px;white-space:pre;line-height:20px;height:20px;font-size:14px;color:#383838;-webkit-text-stroke:0.25px #383838;transform-origin:0 0;transform:scaleX(0.8904);">19249.490</div>
<div class="ab" style="left:578.00px;top:482.00px;white-space:pre;line-height:20px;height:20px;font-size:14px;color:#383838;-webkit-text-stroke:0.25px #383838;transform-origin:0 0;transform:scaleX(0.9712);">VertBlanking</div>
<div class="ab" style="left:748.61px;top:482.00px;white-space:pre;line-height:20px;height:20px;font-size:14px;color:#383838;-webkit-text-stroke:0.25px #383838;transform-origin:0 0;transform:scaleX(0.8904);">1255</div>
<div class="ab" style="left:822.31px;top:482.00px;white-space:pre;line-height:20px;height:20px;font-size:14px;color:#383838;-webkit-text-stroke:0.25px #383838;transform-origin:0 0;transform:scaleX(0.8904);">26</div>
<div class="ab" style="left:333.71px;top:503.60px;white-space:pre;line-height:20px;height:20px;font-size:14px;color:#383838;-webkit-text-stroke:0.25px #383838;transform-origin:0 0;transform:scaleX(0.8904);">1552</div>
<div class="ab" style="left:416.25px;top:503.60px;white-space:pre;line-height:20px;height:20px;font-size:14px;color:#3b3fd6;text-decoration:underline;-webkit-text-stroke:0.2px #3b3fd6;transform-origin:0 0;transform:scaleX(0.8750);">1548</div>
<div class="ab" style="left:487.86px;top:503.60px;white-space:pre;line-height:20px;height:20px;font-size:14px;color:#383838;-webkit-text-stroke:0.25px #383838;transform-origin:0 0;transform:scaleX(0.8904);">19253.705</div>
<div class="ab" style="left:578.00px;top:503.60px;white-space:pre;line-height:20px;height:20px;font-size:14px;color:#383838;-webkit-text-stroke:0.25px #383838;transform-origin:0 0;transform:scaleX(0.9712);">VertBlanking</div>
<div class="ab" style="left:748.61px;top:503.60px;white-space:pre;line-height:20px;height:20px;font-size:14px;color:#383838;-webkit-text-stroke:0.25px #383838;transform-origin:0 0;transform:scaleX(0.8904);">1255</div>
<div class="ab" style="left:822.31px;top:503.60px;white-space:pre;line-height:20px;height:20px;font-size:14px;color:#383838;-webkit-text-stroke:0.25px #383838;transform-origin:0 0;transform:scaleX(0.8904);">10</div>
<div class="ab" style="left:333.71px;top:525.20px;white-space:pre;line-height:20px;height:20px;font-size:14px;color:#383838;-webkit-text-stroke:0.25px #383838;transform-origin:0 0;transform:scaleX(0.8904);">1553</div>
<div class="ab" style="left:416.25px;top:525.20px;white-space:pre;line-height:20px;height:20px;font-size:14px;color:#3b3fd6;text-decoration:underline;-webkit-text-stroke:0.2px #3b3fd6;transform-origin:0 0;transform:scaleX(0.8750);">1549</div>
<div class="ab" style="left:487.86px;top:525.20px;white-space:pre;line-height:20px;height:20px;font-size:14px;color:#383838;-webkit-text-stroke:0.25px #383838;transform-origin:0 0;transform:scaleX(0.8904);">19257.935</div>
<div class="ab" style="left:578.00px;top:525.20px;white-space:pre;line-height:20px;height:20px;font-size:14px;color:#383838;-webkit-text-stroke:0.25px #383838;transform-origin:0 0;transform:scaleX(0.9712);">VertBlanking</div>
<div class="ab" style="left:748.61px;top:525.20px;white-space:pre;line-height:20px;height:20px;font-size:14px;color:#383838;-webkit-text-stroke:0.25px #383838;transform-origin:0 0;transform:scaleX(0.8904);">1255</div>
<div class="ab" style="left:822.31px;top:525.20px;white-space:pre;line-height:20px;height:20px;font-size:14px;color:#383838;-webkit-text-stroke:0.25px #383838;transform-origin:0 0;transform:scaleX(0.8904);">10</div>
<div class="ab" style="left:333.71px;top:546.80px;white-space:pre;line-height:20px;height:20px;font-size:14px;color:#383838;-webkit-text-stroke:0.25px #383838;transform-origin:0 0;transform:scaleX(0.8904);">1554</div>
<div class="ab" style="left:416.25px;top:546.80px;white-space:pre;line-height:20px;height:20px;font-size:14px;color:#3b3fd6;text-decoration:underline;-webkit-text-stroke:0.2px #3b3fd6;transform-origin:0 0;transform:scaleX(0.8750);">1550</div>
<div class="ab" style="left:487.86px;top:546.80px;white-space:pre;line-height:20px;height:20px;font-size:14px;color:#383838;-webkit-text-stroke:0.25px #383838;transform-origin:0 0;transform:scaleX(0.8904);">19262.165</div>
<div class="ab" style="left:578.00px;top:546.80px;white-space:pre;line-height:20px;height:20px;font-size:14px;color:#383838;-webkit-text-stroke:0.25px #383838;transform-origin:0 0;transform:scaleX(0.9712);">VertBlanking</div>
<div class="ab" style="left:748.61px;top:546.80px;white-space:pre;line-height:20px;height:20px;font-size:14px;color:#383838;-webkit-text-stroke:0.25px #383838;transform-origin:0 0;transform:scaleX(0.8904);">1255</div>
<div class="ab" style="left:822.31px;top:546.80px;white-space:pre;line-height:20px;height:20px;font-size:14px;color:#383838;-webkit-text-stroke:0.25px #383838;transform-origin:0 0;transform:scaleX(0.8904);">10</div>
<div class="ab" style="left:333.71px;top:568.40px;white-space:pre;line-height:20px;height:20px;font-size:14px;color:#383838;-webkit-text-stroke:0.25px #383838;transform-origin:0 0;transform:scaleX(0.8904);">1555</div>
<div class="ab" style="left:416.25px;top:568.40px;white-space:pre;line-height:20px;height:20px;font-size:14px;color:#3b3fd6;text-decoration:underline;-webkit-text-stroke:0.2px #3b3fd6;transform-origin:0 0;transform:scaleX(0.8750);">1551</div>
<div class="ab" style="left:487.86px;top:568.40px;white-space:pre;line-height:20px;height:20px;font-size:14px;color:#383838;-webkit-text-stroke:0.25px #383838;transform-origin:0 0;transform:scaleX(0.8904);">19266.390</div>
<div class="ab" style="left:578.00px;top:568.40px;white-space:pre;line-height:20px;height:20px;font-size:14px;color:#383838;-webkit-text-stroke:0.25px #383838;transform-origin:0 0;transform:scaleX(0.9712);">VertBlanking</div>
<div class="ab" style="left:748.61px;top:568.40px;white-space:pre;line-height:20px;height:20px;font-size:14px;color:#383838;-webkit-text-stroke:0.25px #383838;transform-origin:0 0;transform:scaleX(0.8904);">1255</div>
<div class="ab" style="left:822.31px;top:568.40px;white-space:pre;line-height:20px;height:20px;font-size:14px;color:#383838;-webkit-text-stroke:0.25px #383838;transform-origin:0 0;transform:scaleX(0.8904);">10</div>
<div class="ab" style="left:333.71px;top:590.00px;white-space:pre;line-height:20px;height:20px;font-size:14px;color:#383838;-webkit-text-stroke:0.25px #383838;transform-origin:0 0;transform:scaleX(0.8904);">1556</div>
<div class="ab" style="left:416.25px;top:590.00px;white-space:pre;line-height:20px;height:20px;font-size:14px;color:#3b3fd6;text-decoration:underline;-webkit-text-stroke:0.2px #3b3fd6;transform-origin:0 0;transform:scaleX(0.8750);">1552</div>
<div class="ab" style="left:487.86px;top:590.00px;white-space:pre;line-height:20px;height:20px;font-size:14px;color:#383838;-webkit-text-stroke:0.25px #383838;transform-origin:0 0;transform:scaleX(0.8904);">19270.610</div>
<div class="ab" style="left:578.00px;top:590.00px;white-space:pre;line-height:20px;height:20px;font-size:14px;color:#383838;-webkit-text-stroke:0.25px #383838;transform-origin:0 0;transform:scaleX(0.9712);">VertBlanking</div>
<div class="ab" style="left:748.61px;top:590.00px;white-space:pre;line-height:20px;height:20px;font-size:14px;color:#383838;-webkit-text-stroke:0.25px #383838;transform-origin:0 0;transform:scaleX(0.8904);">1255</div>
<div class="ab" style="left:822.31px;top:590.00px;white-space:pre;line-height:20px;height:20px;font-size:14px;color:#383838;-webkit-text-stroke:0.25px #383838;transform-origin:0 0;transform:scaleX(0.8904);">10</div>
<div class="ab" style="left:333.71px;top:611.60px;white-space:pre;line-height:20px;height:20px;font-size:14px;color:#383838;-webkit-text-stroke:0.25px #383838;transform-origin:0 0;transform:scaleX(0.8904);">1557</div>
<div class="ab" style="left:416.25px;top:611.60px;white-space:pre;line-height:20px;height:20px;font-size:14px;color:#3b3fd6;text-decoration:underline;-webkit-text-stroke:0.2px #3b3fd6;transform-origin:0 0;transform:scaleX(0.8750);">1553</div>
<div class="ab" style="left:487.86px;top:611.60px;white-space:pre;line-height:20px;height:20px;font-size:14px;color:#383838;-webkit-text-stroke:0.25px #383838;transform-origin:0 0;transform:scaleX(0.8904);">19274.835</div>
<div class="ab" style="left:578.00px;top:611.60px;white-space:pre;line-height:20px;height:20px;font-size:14px;color:#383838;-webkit-text-stroke:0.25px #383838;transform-origin:0 0;transform:scaleX(0.9712);">VertBlanking</div>
<div class="ab" style="left:748.61px;top:611.60px;white-space:pre;line-height:20px;height:20px;font-size:14px;color:#383838;-webkit-text-stroke:0.25px #383838;transform-origin:0 0;transform:scaleX(0.8904);">1255</div>
<div class="ab" style="left:822.31px;top:611.60px;white-space:pre;line-height:20px;height:20px;font-size:14px;color:#383838;-webkit-text-stroke:0.25px #383838;transform-origin:0 0;transform:scaleX(0.8904);">10</div>
<div class="ab" style="left:333.71px;top:633.20px;white-space:pre;line-height:20px;height:20px;font-size:14px;color:#383838;-webkit-text-stroke:0.25px #383838;transform-origin:0 0;transform:scaleX(0.8904);">1558</div>
<div class="ab" style="left:416.25px;top:633.20px;white-space:pre;line-height:20px;height:20px;font-size:14px;color:#3b3fd6;text-decoration:underline;-webkit-text-stroke:0.2px #3b3fd6;transform-origin:0 0;transform:scaleX(0.8750);">1554</div>
<div class="ab" style="left:487.86px;top:633.20px;white-space:pre;line-height:20px;height:20px;font-size:14px;color:#383838;-webkit-text-stroke:0.25px #383838;transform-origin:0 0;transform:scaleX(0.8904);">19279.065</div>
<div class="ab" style="left:578.00px;top:633.20px;white-space:pre;line-height:20px;height:20px;font-size:14px;color:#383838;-webkit-text-stroke:0.25px #383838;transform-origin:0 0;transform:scaleX(0.9712);">VertBlanking</div>
<div class="ab" style="left:748.61px;top:633.20px;white-space:pre;line-height:20px;height:20px;font-size:14px;color:#383838;-webkit-text-stroke:0.25px #383838;transform-origin:0 0;transform:scaleX(0.8904);">1255</div>
<div class="ab" style="left:822.31px;top:633.20px;white-space:pre;line-height:20px;height:20px;font-size:14px;color:#383838;-webkit-text-stroke:0.25px #383838;transform-origin:0 0;transform:scaleX(0.8904);">10</div>
<div class="ab" style="left:333.71px;top:654.80px;white-space:pre;line-height:20px;height:20px;font-size:14px;color:#383838;-webkit-text-stroke:0.25px #383838;transform-origin:0 0;transform:scaleX(0.8904);">1559</div>
<div class="ab" style="left:416.25px;top:654.80px;white-space:pre;line-height:20px;height:20px;font-size:14px;color:#3b3fd6;text-decoration:underline;-webkit-text-stroke:0.2px #3b3fd6;transform-origin:0 0;transform:scaleX(0.8750);">1555</div>
<div class="ab" style="left:487.86px;top:654.80px;white-space:pre;line-height:20px;height:20px;font-size:14px;color:#383838;-webkit-text-stroke:0.25px #383838;transform-origin:0 0;transform:scaleX(0.8904);">19283.295</div>
<div class="ab" style="left:578.00px;top:654.80px;white-space:pre;line-height:20px;height:20px;font-size:14px;color:#383838;-webkit-text-stroke:0.25px #383838;transform-origin:0 0;transform:scaleX(0.9712);">VertBlanking</div>
<div class="ab" style="left:748.61px;top:654.80px;white-space:pre;line-height:20px;height:20px;font-size:14px;color:#383838;-webkit-text-stroke:0.25px #383838;transform-origin:0 0;transform:scaleX(0.8904);">1255</div>
<div class="ab" style="left:822.31px;top:654.80px;white-space:pre;line-height:20px;height:20px;font-size:14px;color:#383838;-webkit-text-stroke:0.25px #383838;transform-origin:0 0;transform:scaleX(0.8904);">10</div>
<div class="ab" style="left:333.71px;top:676.40px;white-space:pre;line-height:20px;height:20px;font-size:14px;color:#383838;-webkit-text-stroke:0.25px #383838;transform-origin:0 0;transform:scaleX(0.8904);">1560</div>
<div class="ab" style="left:416.25px;top:676.40px;white-space:pre;line-height:20px;height:20px;font-size:14px;color:#3b3fd6;text-decoration:underline;-webkit-text-stroke:0.2px #3b3fd6;transform-origin:0 0;transform:scaleX(0.8750);">1556</div>
<div class="ab" style="left:487.86px;top:676.40px;white-space:pre;line-height:20px;height:20px;font-size:14px;color:#383838;-webkit-text-stroke:0.25px #383838;transform-origin:0 0;transform:scaleX(0.8904);">19287.510</div>
<div class="ab" style="left:578.00px;top:676.40px;white-space:pre;line-height:20px;height:20px;font-size:14px;color:#383838;-webkit-text-stroke:0.25px #383838;transform-origin:0 0;transform:scaleX(0.9712);">VertBlanking</div>
<div class="ab" style="left:748.61px;top:676.40px;white-space:pre;line-height:20px;height:20px;font-size:14px;color:#383838;-webkit-text-stroke:0.25px #383838;transform-origin:0 0;transform:scaleX(0.8904);">1255</div>
<div class="ab" style="left:822.31px;top:676.40px;white-space:pre;line-height:20px;height:20px;font-size:14px;color:#383838;-webkit-text-stroke:0.25px #383838;transform-origin:0 0;transform:scaleX(0.8904);">10</div>
<div class="ab" style="left:333.71px;top:698.00px;white-space:pre;line-height:20px;height:20px;font-size:14px;color:#383838;-webkit-text-stroke:0.25px #383838;transform-origin:0 0;transform:scaleX(0.8904);">1561</div>
<div class="ab" style="left:416.25px;top:698.00px;white-space:pre;line-height:20px;height:20px;font-size:14px;color:#3b3fd6;text-decoration:underline;-webkit-text-stroke:0.2px #3b3fd6;transform-origin:0 0;transform:scaleX(0.8750);">1557</div>
<div class="ab" style="left:487.86px;top:698.00px;white-space:pre;line-height:20px;height:20px;font-size:14px;color:#383838;-webkit-text-stroke:0.25px #383838;transform-origin:0 0;transform:scaleX(0.8904);">19291.740</div>
<div class="ab" style="left:578.00px;top:698.00px;white-space:pre;line-height:20px;height:20px;font-size:14px;color:#383838;-webkit-text-stroke:0.25px #383838;transform-origin:0 0;transform:scaleX(0.9868);">Active</div>
<div class="ab" style="left:748.61px;top:698.00px;white-space:pre;line-height:20px;height:20px;font-size:14px;color:#383838;-webkit-text-stroke:0.25px #383838;transform-origin:0 0;transform:scaleX(0.8904);">1255</div>
<div class="ab" style="left:822.31px;top:698.00px;white-space:pre;line-height:20px;height:20px;font-size:14px;color:#383838;-webkit-text-stroke:0.25px #383838;transform-origin:0 0;transform:scaleX(0.8904);">1231</div>
<div class="ab" style="left:275.34px;top:724.60px;white-space:pre;line-height:20px;height:20px;font-size:14px;color:#333;transform-origin:0 0;transform:scaleX(0.9149);">Selected Bursts</div>
<div class="ab" style="left:271.04px;top:743.30px;white-space:pre;line-height:20px;height:20px;font-size:14px;font-weight:bold;color:#1a1a1a;transform-origin:0 0;transform:scaleX(0.9630);">First Burst#:</div>
<div class="ab" style="left:359.12px;top:743.60px;white-space:pre;line-height:20px;height:20px;font-size:14px;color:#333;transform-origin:0 0;transform:scaleX(0.8750);">1545</div>
<div class="ab" style="left:492.77px;top:743.30px;white-space:pre;line-height:20px;height:20px;font-size:14px;font-weight:bold;color:#1a1a1a;transform-origin:0 0;transform:scaleX(0.9810);">Last Burst#:</div>
<div class="ab" style="left:580.38px;top:743.60px;white-space:pre;line-height:20px;height:20px;font-size:14px;color:#333;transform-origin:0 0;transform:scaleX(0.8750);">1546</div>
<div class="ab" style="left:715.00px;top:743.30px;white-space:pre;line-height:20px;height:20px;font-size:14px;font-weight:bold;color:#1a1a1a;transform-origin:0 0;transform:scaleX(0.9722);">Time:</div>
<div class="ab" style="left:757.83px;top:743.60px;white-space:pre;line-height:20px;height:20px;font-size:14px;color:#333;transform-origin:0 0;transform:scaleX(0.9180);">12.010 ms</div>
<div class="ab" style="left:922.66px;top:120.50px;white-space:pre;line-height:20px;height:20px;font-size:14px;color:#333;transform-origin:0 0;transform:scaleX(0.9379);">Lane view</div>
<div class="ab" style="left:995.51px;top:121.90px;white-space:pre;line-height:20px;height:20px;font-size:14px;color:#333;transform-origin:0 0;transform:scaleX(0.9907);">Info view</div>
<div class="ab" style="left:1006.80px;top:148.60px;white-space:pre;line-height:20px;height:20px;font-size:13.5px;font-weight:bold;color:#161616;transform-origin:0 0;transform:scaleX(0.9539);">Lane1</div>
<div class="ab" style="left:1063.64px;top:148.60px;white-space:pre;line-height:20px;height:20px;font-size:13.5px;font-weight:bold;color:#161616;transform-origin:0 0;transform:scaleX(0.9553);">Lane3</div>
<div class="ab" style="left:1120.55px;top:148.60px;white-space:pre;line-height:20px;height:20px;font-size:13.5px;font-weight:bold;color:#161616;transform-origin:0 0;transform:scaleX(0.9539);">Lane4</div>
<div class="ab" style="left:1173.71px;top:150.20px;white-space:pre;line-height:20px;height:20px;font-size:14px;color:#333;transform-origin:0 0;transform:scaleX(0.9949);">Offset:</div>
<div class="ann" style="left:1302.20px;top:66.70px;font-size:21.5px;line-height:30px;transform-origin:0 0;transform:scaleX(0.9955)">TPS1 SYMBOLS</div>
<div class="ann" style="left:1297.48px;top:96.60px;font-size:21.5px;line-height:30px;transform-origin:0 0;transform:scaleX(1.0462)">DURING CLOCK</div>
<div class="ann" style="left:1281.39px;top:125.80px;font-size:21.5px;line-height:30px;transform-origin:0 0;transform:scaleX(1.0359)">RECOVERY PHASE</div>
<div class="ann" style="left:16.85px;top:344.00px;font-size:21.5px;line-height:30px;transform-origin:0 0;transform:scaleX(1.0655)">MAIN LINK TURNS</div>
<div class="ann" style="left:55.99px;top:373.70px;font-size:21.5px;line-height:30px;transform-origin:0 0;transform:scaleX(1.0368)">OFF AFTER</div>
<div class="ann" style="left:13.60px;top:403.30px;font-size:21.5px;line-height:30px;transform-origin:0 0;transform:scaleX(1.0242)">PHY_SLEEP EVENT</div>
<div class="ann" style="left:51.28px;top:507.60px;font-size:21.5px;line-height:30px;transform-origin:0 0;transform:scaleX(1.0377)">CAPTURE OF THE</div>
<div class="ann" style="left:89.45px;top:537.40px;font-size:21.5px;line-height:30px;transform-origin:0 0;transform:scaleX(1.0734)">MAIN LINK</div>
<div class="ann" style="left:96.20px;top:566.60px;font-size:21.5px;line-height:30px;transform-origin:0 0;transform:scaleX(1.0703)">WAKE UP</div>
<div class="ann" style="left:86.89px;top:595.90px;font-size:21.5px;line-height:30px;transform-origin:0 0;transform:scaleX(1.0291)">SEQUENCE</div>
<div class="ann" style="left:59.44px;top:625.70px;font-size:21.5px;line-height:30px;transform-origin:0 0;transform:scaleX(1.0764)">FOLLOWING AN</div>
<div class="ann" style="left:83.55px;top:655.80px;font-size:21.5px;line-height:30px;transform-origin:0 0;transform:scaleX(1.0731)">AUX_WAKE</div>
<div class="ann" style="left:112.40px;top:684.30px;font-size:21.5px;line-height:30px;transform-origin:0 0;transform:scaleX(1.0190)">EVENT</div>
<div class="ann" style="left:1309.35px;top:548.30px;font-size:21.5px;line-height:30px;transform-origin:0 0;transform:scaleX(1.0683)">CONVENIENT</div>
<div class="ann" style="left:1293.89px;top:578.70px;font-size:21.5px;line-height:30px;transform-origin:0 0;transform:scaleX(1.0290)">SELECTION BAR</div>
<div class="ann" style="left:1293.37px;top:607.40px;font-size:21.5px;line-height:30px;transform-origin:0 0;transform:scaleX(1.0500)">SHOWS USEFUL</div>
<div class="ann" style="left:1306.24px;top:637.40px;font-size:21.5px;line-height:30px;transform-origin:0 0;transform:scaleX(1.0746)">SUMMARY OF</div>
<div class="ann" style="left:1287.18px;top:666.60px;font-size:21.5px;line-height:30px;transform-origin:0 0;transform:scaleX(1.0383)">SELECTED ROWS</div>
<svg class="ab" style="left:0;top:0" width="1536" height="864"><rect x="558.3" y="374.7" width="183.5" height="26.1" rx="13" fill="none" stroke="#e65b23" stroke-width="3.7"/><rect x="558.3" y="419.5" width="183.5" height="60" rx="26" fill="none" stroke="#e65b23" stroke-width="3.7"/><rect x="264.1" y="724.4" width="561" height="45.8" rx="21" fill="none" stroke="#e65b23" stroke-width="3.7"/><rect x="991.7" y="141.5" width="180.2" height="229" rx="33" fill="none" stroke="#e65b23" stroke-width="3.7"/><line x1="201.3" y1="389.4" x2="537.00" y2="389.40" stroke="#e65b23" stroke-width="3.3"/><path d="M546 389.4 L536.00 395.90 L536.00 382.90 Z" fill="#e65b23"/><line x1="226" y1="575.1" x2="547.42" y2="472.73" stroke="#e65b23" stroke-width="3.3"/><path d="M556 470 L548.44 479.23 L544.50 466.84 Z" fill="#e65b23"/><line x1="1287" y1="103" x2="1200.97" y2="148.03" stroke="#e65b23" stroke-width="3.3"/><path d="M1193 152.2 L1198.85 141.80 L1204.87 153.32 Z" fill="#e65b23"/><line x1="1271.5" y1="645.2" x2="851.26" y2="744.73" stroke="#e65b23" stroke-width="3.3"/><path d="M842.5 746.8 L850.73 738.17 L853.73 750.82 Z" fill="#e65b23"/></svg>
</body></html>
